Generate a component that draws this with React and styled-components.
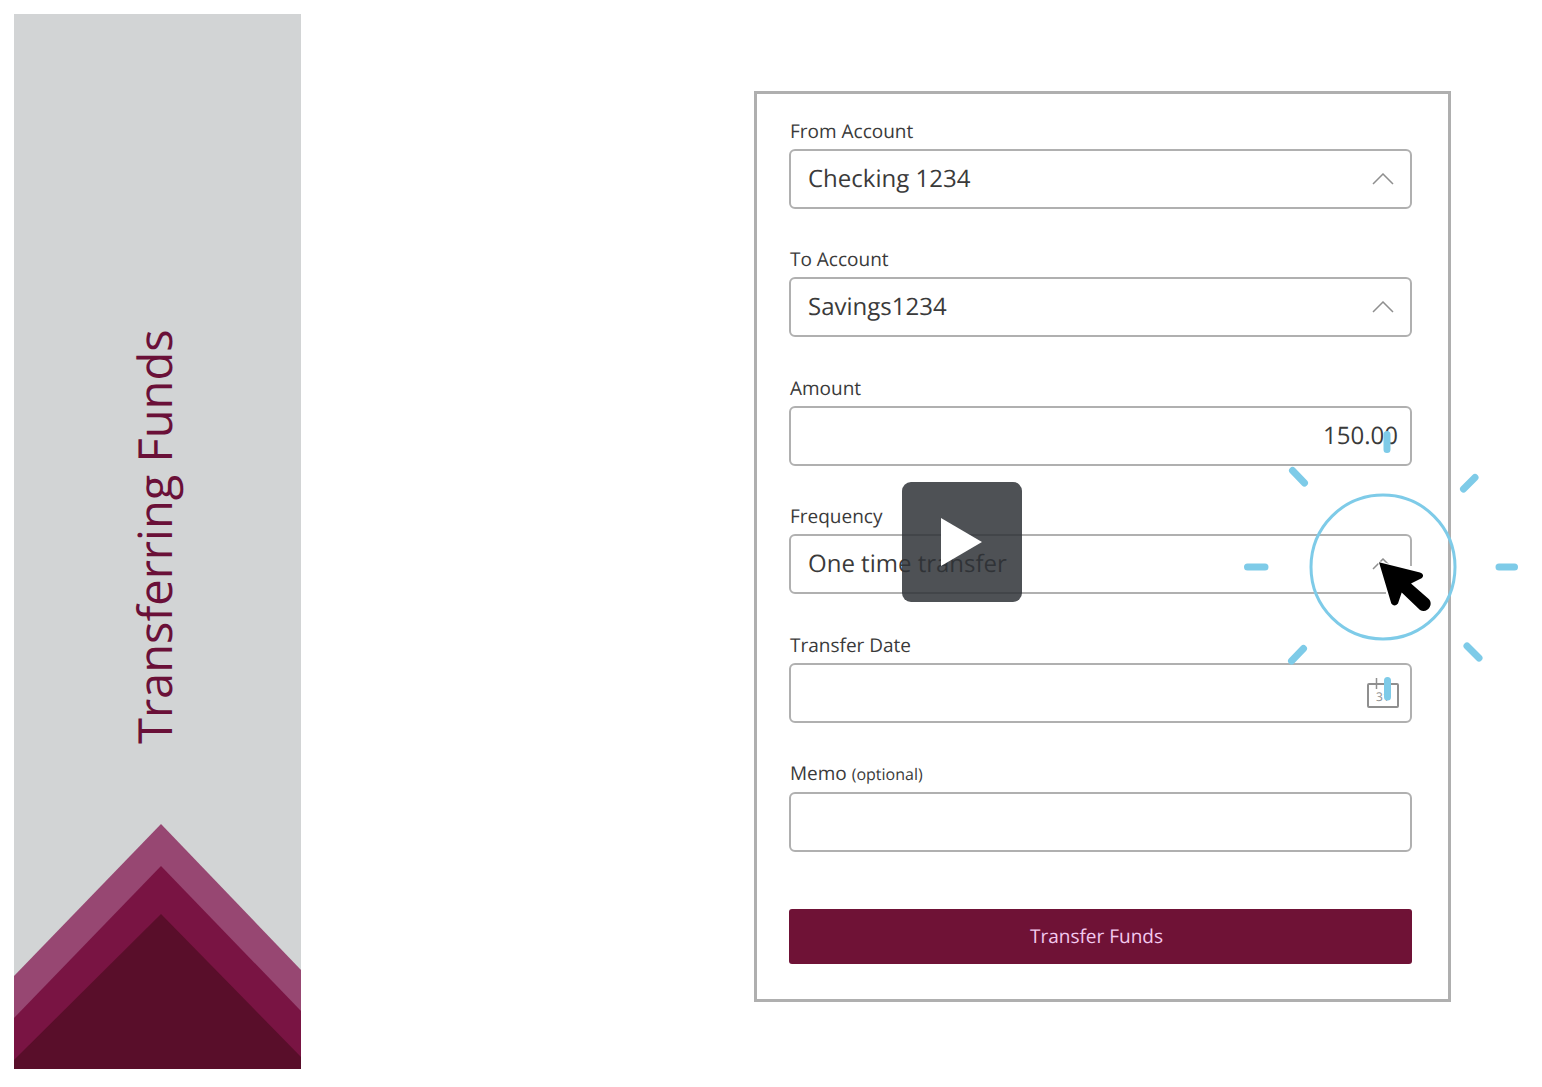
import styled, { createGlobalStyle } from "styled-components";

const accounts = ["Checking 1234", "Savings1234"];
const frequencies = ["One time transfer", "Weekly", "Monthly"];

const Chevron = () => (
  <ChevronIcon viewBox="0 0 22 12" aria-hidden="true">
    <path d="M1 11 L11 1 L21 11" fill="none" stroke="#8f8f8f" strokeWidth="1.5" />
  </ChevronIcon>
);

const SelectField = ({ id, label, options, defaultValue, children }) => (
  <Field>
    <Label htmlFor={id}>{label}</Label>
    <Control>
      <Select id={id} defaultValue={defaultValue}>
        {options.map((option) => (
          <option key={option}>{option}</option>
        ))}
      </Select>
      <Chevron />
      {children}
    </Control>
  </Field>
);

const Ribbon = () => (
  <RibbonArt viewBox="0 0 287 245" preserveAspectRatio="none" aria-hidden="true">
    <path d="M147 0 L287 146 V245 H0 V152 Z" fill="#974772" />
    <path d="M147 42 L287 187 V245 H0 V194 Z" fill="#791443" />
    <path d="M147 90 L287 233 V245 H0 V236 Z" fill="#590e2a" />
  </RibbonArt>
);

const ClickMarker = () => (
  <Marker viewBox="0 0 280 280" aria-hidden="true">
    <rect x="143" y="139" width="34" height="34" fill="#fff" />
    <g fill="none" stroke="#7ecbe8">
      <circle cx="140" cy="140" r="72" strokeWidth="3" />
      <path
        strokeWidth="7"
        strokeLinecap="round"
        d="M4.5 140 H22 M256 140 H271.5 M144 7.5 V22.5 M144.5 253.5 V270
          M49.5 43.5 L61.5 56 M232 50.5 L220.5 62 M60.5 221.5 L48.5 234 M224 219 L236 231"
      />
    </g>
    <path
      d="M136 135.3 L177 145.5 Q182 147.5 179 151 L168 156.5 L186 172.3
        C191 178 184 187 177 183 L158.7 165.5 L155 176.5 Q151.5 180.5 148.3 176.5 Z"
      fill="#000"
      stroke="#fff"
      strokeWidth="2"
      paintOrder="stroke"
    />
  </Marker>
);

const App = () => {
  return (
    <>
      <GlobalStyle />
      <Page>
        <Sidebar>
          <Title>Transferring Funds</Title>
          <Ribbon />
        </Sidebar>

        <Stage>
          <Card onSubmit={(e) => e.preventDefault()}>
            <Fields>
              <SelectField
                id="from"
                label="From Account"
                options={accounts}
                defaultValue="Checking 1234"
              />
              <SelectField
                id="to"
                label="To Account"
                options={accounts}
                defaultValue="Savings1234"
              />
              <Field>
                <Label htmlFor="amount">Amount</Label>
                <Control>
                  <Input id="amount" $align="right" defaultValue="150.00" />
                </Control>
              </Field>
              <SelectField
                id="frequency"
                label="Frequency"
                options={frequencies}
                defaultValue="One time transfer"
              >
                <ClickMarker />
              </SelectField>
              <Field>
                <Label htmlFor="date">Transfer Date</Label>
                <Control>
                  <Input id="date" />
                  <DateButton type="button" aria-label="Pick a date">
                    <svg width="34" height="31" viewBox="0 0 34 31">
                      <g fill="none" stroke="#8f8f8f" strokeWidth="2">
                        <rect x="2" y="6" width="30" height="23" rx="1" />
                        <path d="M10.5 0 V11 M22 0 V11" strokeWidth="1.5" />
                      </g>
                      <text x="10" y="23" fontSize="12" fill="#8f8f8f">
                        31
                      </text>
                    </svg>
                  </DateButton>
                </Control>
              </Field>
              <Field>
                <Label htmlFor="memo">
                  Memo <small>(optional)</small>
                </Label>
                <Control>
                  <Input id="memo" />
                </Control>
              </Field>
            </Fields>
            <Submit type="submit">Transfer Funds</Submit>
          </Card>

          <PlayButton type="button" aria-label="Play video">
            <svg width="41" height="48" viewBox="0 0 41 48">
              <path d="M0 0 L41 24 L0 48 Z" fill="#fff" />
            </svg>
          </PlayButton>
        </Stage>
      </Page>
    </>
  );
};

const GlobalStyle = createGlobalStyle`
  * {
    box-sizing: border-box;
  }

  body {
    margin: 0;
    background: #fff;
    color: #3a3a3a;
    font-family: "Open Sans", "Noto Sans", sans-serif;
    text-rendering: geometricPrecision;
  }

  input,
  select,
  button {
    font-family: inherit;
    color: inherit;
    text-rendering: inherit;
  }
`;

const Page = styled.div`
  display: flex;
  min-height: 100vh;
  padding: 14px 0 18px 14px;
`;

const Sidebar = styled.aside`
  display: flex;
  flex: 0 0 287px;
  flex-direction: column;
  background: #d2d4d5;
`;

const Title = styled.h1`
  display: flex;
  flex: 1;
  align-items: center;
  align-self: center;
  margin: 0;
  padding-top: 80px;
  padding-left: 8px;
  writing-mode: vertical-rl;
  transform: rotate(180deg);
  font-size: 47px;
  font-weight: 400;
  line-height: 64px;
  color: #6a1038;
`;

const RibbonArt = styled.svg`
  display: block;
  width: 100%;
  height: 245px;
`;

const Stage = styled.main`
  position: relative;
  display: flex;
  flex: 1;
  justify-content: flex-end;
  padding: 77px 91px 67px 40px;
`;

const Card = styled.form`
  display: flex;
  flex-direction: column;
  gap: 57px;
  width: 100%;
  max-width: 697px;
  padding: 23px 36px 35px 32px;
  border: 3px solid #afafaf;
  background: #fff;
`;

const Fields = styled.div`
  display: flex;
  flex: 1;
  flex-direction: column;
  justify-content: space-between;
`;

const Field = styled.div`
  display: flex;
  flex-direction: column;
  gap: 4px;
`;

const Label = styled.label`
  padding-left: 1px;
  font-size: 19px;
  line-height: 28px;

  small {
    font-size: 16px;
  }
`;

const Control = styled.div`
  position: relative;
`;

const Input = styled.input`
  display: block;
  width: 100%;
  height: 60px;
  padding: 0 12px 0 17px;
  border: 2px solid #b0b0b0;
  border-radius: 6px;
  background: #fff;
  font-size: 24px;
  text-align: ${({ $align }) => $align || "left"};
`;

const Select = styled(Input).attrs({ as: "select" })`
  padding-bottom: 2px;
  appearance: none;
`;

const ChevronIcon = styled.svg`
  position: absolute;
  top: 24px;
  right: 18px;
  width: 22px;
  height: 12px;
  pointer-events: none;
`;

const DateButton = styled.button`
  position: absolute;
  top: 15px;
  right: 12px;
  padding: 0;
  border: 0;
  background: none;
  line-height: 0;
  cursor: pointer;
`;

const Marker = styled.svg`
  position: absolute;
  z-index: 1;
  top: -107px;
  right: -111px;
  width: 280px;
  height: 280px;
  pointer-events: none;
`;

const Submit = styled.button`
  height: 55px;
  padding: 0 8px 2px 0;
  border: 0;
  border-radius: 3px;
  background: #6f1236;
  color: #f3c9ee;
  font-size: 19px;
  cursor: pointer;
`;

const PlayButton = styled.button`
  position: absolute;
  z-index: 2;
  top: calc(50% - 60px);
  left: calc(50% - 20px);
  display: flex;
  align-items: center;
  justify-content: center;
  width: 120px;
  height: 120px;
  border: 0;
  border-radius: 9px;
  background: rgba(47, 51, 55, 0.85);
  cursor: pointer;
`;

export default App;
